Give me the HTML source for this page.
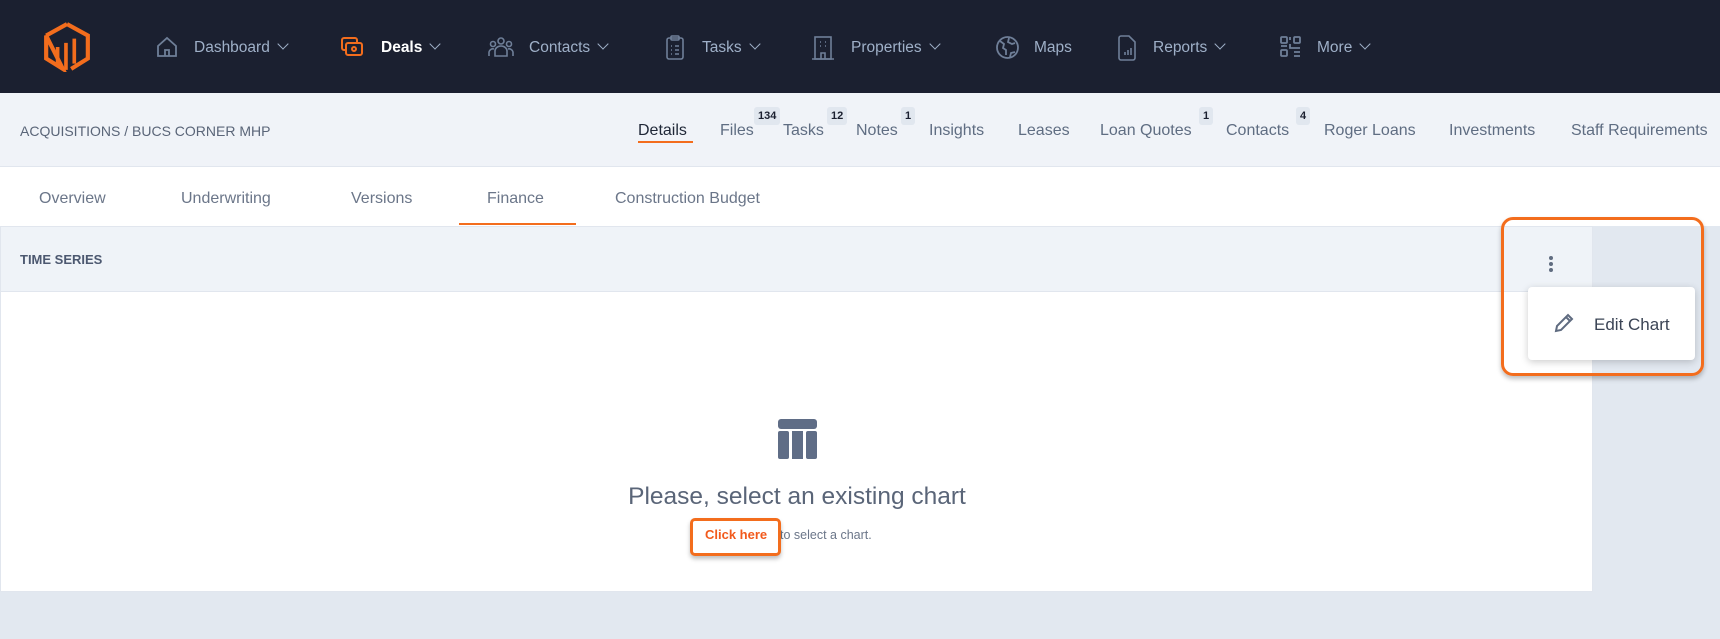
<!DOCTYPE html>
<html><head><meta charset="utf-8"><style>
*{margin:0;padding:0;box-sizing:border-box}
body{width:1720px;height:639px;overflow:hidden;background:#e2e8f0;font-family:"Liberation Sans",sans-serif;position:relative}
.a{position:absolute;white-space:nowrap}
.nav{position:absolute;left:0;top:0;width:1720px;height:93px;background:#1b2030}
.ni{position:absolute;top:39px;font-size:15.5px;color:#9fb0c8}
.ic{position:absolute;top:35px}
.chev{display:inline-block;width:8px;height:8px;border-right:1.6px solid #9fb0c8;border-bottom:1.6px solid #9fb0c8;transform:rotate(45deg);margin-left:9px;position:relative;top:-4px}
.sub{position:absolute;left:0;top:93px;width:1720px;height:74px;background:#f0f3f8;border-bottom:1px solid #e1e6ee}
.t{position:absolute;top:122px;font-size:16px;color:#5f6d82}
.bd{position:absolute;top:107px;font-size:11px;font-weight:bold;color:#1b2030;background:#e1e7ef;border-radius:3px;padding:2px 4px;line-height:14px}
.tabs{position:absolute;left:0;top:167px;width:1720px;height:59px;background:#fff}
.tb{position:absolute;top:190px;font-size:16px;color:#6b7689}
</style></head><body>
<div class="nav">
<svg class="a" style="left:43px;top:22px" width="48" height="50" viewBox="0 0 46 48"><path d="M23 2 L43 13 L43 35 L27 45 M19 45 L3 35 L3 13 Z" fill="none" stroke="#f36d1d" stroke-width="4"/><path d="M3 13 L23 2" stroke="#f36d1d" stroke-width="4"/><path d="M14 24 V40 M22 20 V46 M30 16 V40" stroke="#f36d1d" stroke-width="3.5"/></svg>
<svg class="ic" style="left:155px" width="24" height="24" viewBox="0 0 24 24" fill="none" stroke="#6f7f98" stroke-width="1.8"><path d="M3 11 L12 3 L21 11 V21 H3 Z M10 21 V15 H14 V21"/></svg>
<div class="ni" style="left:194px">Dashboard<span class="chev"></span></div>
<svg class="ic" style="left:340px" width="24" height="24" viewBox="0 0 24 24" fill="none" stroke="#f36d1d" stroke-width="2"><rect x="2" y="3" width="15" height="12" rx="2"/><rect x="6" y="8" width="16" height="12" rx="2" fill="#1b2030"/><circle cx="14" cy="14" r="2"/></svg>
<div class="ni" style="left:381px;color:#fff;font-weight:bold">Deals<span class="chev"></span></div>
<svg class="ic" style="left:488px" width="26" height="24" viewBox="0 0 26 24" fill="none" stroke="#6f7f98" stroke-width="1.6"><circle cx="13" cy="6" r="3"/><circle cx="5" cy="9" r="2.5"/><circle cx="21" cy="9" r="2.5"/><path d="M7 21 V16 a6 5 0 0 1 12 0 V21 Z M1 21 V17 a4 4 0 0 1 5 -3 M25 21 V17 a4 4 0 0 0 -5 -3"/></svg>
<div class="ni" style="left:529px">Contacts<span class="chev"></span></div>
<svg class="ic" style="left:665px" width="20" height="26" viewBox="0 0 20 26" fill="none" stroke="#6f7f98" stroke-width="1.6"><rect x="2" y="3" width="16" height="21" rx="2"/><rect x="6" y="1" width="8" height="4" rx="1"/><path d="M6 11h1M10 11h4M6 15h1M10 15h4M6 19h1M10 19h4"/></svg>
<div class="ni" style="left:702px">Tasks<span class="chev"></span></div>
<svg class="ic" style="left:811px" width="24" height="26" viewBox="0 0 24 26" fill="none" stroke="#6f7f98" stroke-width="1.6"><rect x="4" y="2" width="16" height="22"/><path d="M1 24h22M9 7h1M14 7h1M9 11h1M14 11h1M10 24v-6h4v6"/></svg>
<div class="ni" style="left:851px">Properties<span class="chev"></span></div>
<svg class="ic" style="left:995px" width="25" height="25" viewBox="0 0 25 25" fill="none" stroke="#6f7f98" stroke-width="1.8"><circle cx="12.5" cy="12.5" r="10.5"/><path d="M5 6 l4 3 -1 4 3 2 v5 M14 3 l-1 4 4 2 3 -1 M15 22 l1-4 4-1"/></svg>
<div class="ni" style="left:1034px">Maps</div>
<svg class="ic" style="left:1117px" width="20" height="26" viewBox="0 0 20 26" fill="none" stroke="#6f7f98" stroke-width="1.6"><path d="M2 3 a2 2 0 0 1 2-2 H12 L18 7 V23 a2 2 0 0 1-2 2 H4 a2 2 0 0 1-2-2 Z M8 20v-3M11 20v-5M14 20v-7"/></svg>
<div class="ni" style="left:1153px">Reports<span class="chev"></span></div>
<svg class="ic" style="left:1280px" width="22" height="24" viewBox="0 0 22 24" fill="none" stroke="#6f7f98" stroke-width="1.8"><rect x="1" y="2" width="6" height="6" rx="1"/><rect x="14" y="2" width="6" height="6" rx="1"/><rect x="1" y="15" width="6" height="6" rx="1"/><path d="M10 2v3M10 9v4h10M14 17h6M14 21h6M1 11h6"/></svg>
<div class="ni" style="left:1317px">More<span class="chev"></span></div>
</div>

<div class="sub">
<div class="a" style="left:20px;top:30px;font-size:14px;color:#5a6578">ACQUISITIONS / BUCS CORNER MHP</div>
</div>
<div class="t" style="left:638px;color:#1f2737">Details</div>
<div class="a" style="left:638px;top:141px;width:55px;height:2px;background:#f36d1d"></div>
<div class="t" style="left:720px">Files</div><div class="bd" style="left:754px">134</div>
<div class="t" style="left:783px">Tasks</div><div class="bd" style="left:827px">12</div>
<div class="t" style="left:856px">Notes</div><div class="bd" style="left:901px">1</div>
<div class="t" style="left:929px">Insights</div>
<div class="t" style="left:1018px">Leases</div>
<div class="t" style="left:1100px">Loan Quotes</div><div class="bd" style="left:1199px">1</div>
<div class="t" style="left:1226px">Contacts</div><div class="bd" style="left:1296px">4</div>
<div class="t" style="left:1324px">Roger Loans</div>
<div class="t" style="left:1449px">Investments</div>
<div class="t" style="left:1571px">Staff Requirements</div>

<div class="tabs"></div>
<div class="tb" style="left:39px">Overview</div>
<div class="tb" style="left:181px">Underwriting</div>
<div class="tb" style="left:351px">Versions</div>
<div class="tb" style="left:487px">Finance</div>
<div class="a" style="left:459px;top:223px;width:117px;height:2px;background:#f36d1d"></div>
<div class="tb" style="left:615px">Construction Budget</div>

<div class="a" style="left:0;top:226px;width:1593px;height:66px;background:#eff3f8;border:1px solid #e1e6ee"></div>
<div class="a" style="left:20px;top:252px;font-size:13px;font-weight:bold;color:#4c5870">TIME SERIES</div>
<div class="a" style="left:0;top:292px;width:1593px;height:300px;background:#fff;border:1px solid #e1e6ee;border-top:none"></div>
<div class="a" style="left:1549px;top:256px;width:4px;height:4px;border-radius:2px;background:#606c80;box-shadow:0 6px 0 #606c80,0 12px 0 #606c80"></div>

<div class="a" style="left:1528px;top:287px;width:167px;height:73px;background:#fff;border-radius:4px;box-shadow:0 2px 8px rgba(0,0,0,.2)"></div>
<svg class="a" style="left:1553px;top:312px" width="22" height="22" viewBox="0 0 22 22" fill="none" stroke="#5f6b80" stroke-width="2"><path d="M3 19 L4 14 L15 3 L19 7 L8 18 Z M13 5 L17 9"/></svg>
<div class="a" style="left:1594px;top:315px;font-size:17px;color:#3b4455">Edit Chart</div>
<div class="a" style="left:1501px;top:217px;width:203px;height:159px;border:3px solid #f36d1d;border-radius:12px;box-shadow:0 3px 5px rgba(0,0,0,.25)"></div>

<svg class="a" style="left:778px;top:419px" width="39" height="40" viewBox="0 0 39 40"><rect x="0" y="0" width="39" height="10" rx="3" fill="#5f6d86"/><rect x="0" y="12" width="11" height="28" rx="2" fill="#5f6d86"/><rect x="14" y="12" width="11" height="28" fill="#5f6d86"/><rect x="28" y="12" width="11" height="28" rx="2" fill="#5f6d86"/></svg>
<div class="a" style="left:547px;top:483px;width:500px;text-align:center;font-size:24.5px;color:#5a6578">Please, select an existing chart</div>
<div class="a" style="left:780px;top:528px;font-size:12.5px;color:#6b7689">to select a chart.</div>
<div class="a" style="left:690px;top:518px;width:91px;height:38px;border:3px solid #f36d1d;border-radius:5px;background:#fff;box-shadow:0 3px 4px rgba(0,0,0,.25)"></div>
<div class="a" style="left:705px;top:527px;font-size:13px;font-weight:bold;color:#f25a1c">Click here</div>
</body></html>
